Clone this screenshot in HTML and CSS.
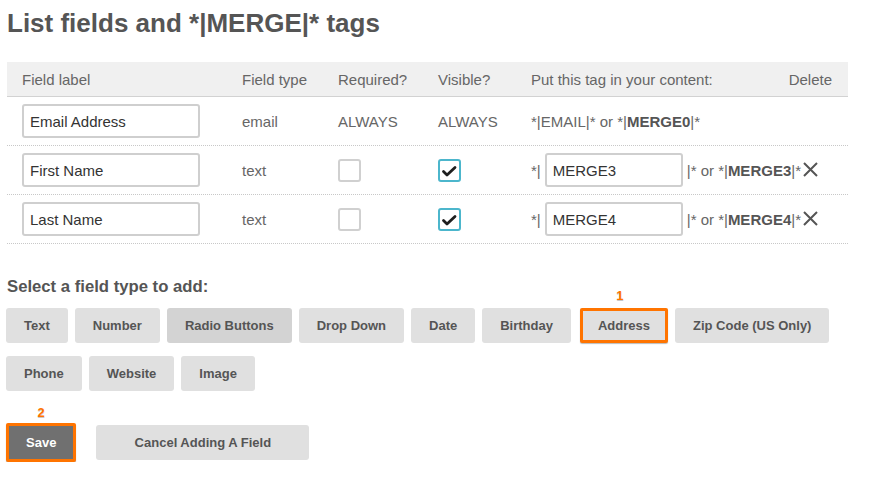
FILE: index.html
```html
<!DOCTYPE html>
<html>
<head>
<meta charset="utf-8">
<link rel="stylesheet" href="styles.css">
</head>
<body>
<div class="page">
  <h1 class="title">List fields and *|MERGE|* tags</h1>

  <div class="fields">
    <div class="row head">
      <div class="cell">Field label</div>
      <div class="cell">Field type</div>
      <div class="cell">Required?</div>
      <div class="cell">Visible?</div>
      <div class="cell tagcell"><span>Put this tag in your content:</span><span class="del-head">Delete</span></div>
    </div>

    <div class="row">
      <div class="cell"><div class="input label-input">Email Address</div></div>
      <div class="cell">email</div>
      <div class="cell">ALWAYS</div>
      <div class="cell">ALWAYS</div>
      <div class="cell tagcell">*|EMAIL|* or *|<b>MERGE0</b>|*</div>
    </div>

    <div class="row">
      <div class="cell"><div class="input label-input">First Name</div></div>
      <div class="cell">text</div>
      <div class="cell"><span class="check"></span></div>
      <div class="cell"><span class="check on"><svg width="19" height="19" viewBox="0 0 19 19"><path d="M3.5 10.5 L7 14 L15 6.5" fill="none" stroke="#1e1e1e" stroke-width="2.8" stroke-linecap="round" stroke-linejoin="round"/></svg></span></div>
      <div class="cell tagcell">
        <span class="tag">*|</span>
        <div class="input tag-input">MERGE3</div>
        <span class="tag">|* or *|<b>MERGE3</b>|*</span>
        <svg class="x" width="15" height="15" viewBox="0 0 15 15"><path d="M1 1 L14 14 M14 1 L1 14" stroke="#555" stroke-width="2"/></svg>
      </div>
    </div>

    <div class="row">
      <div class="cell"><div class="input label-input">Last Name</div></div>
      <div class="cell">text</div>
      <div class="cell"><span class="check"></span></div>
      <div class="cell"><span class="check on"><svg width="19" height="19" viewBox="0 0 19 19"><path d="M3.5 10.5 L7 14 L15 6.5" fill="none" stroke="#1e1e1e" stroke-width="2.8" stroke-linecap="round" stroke-linejoin="round"/></svg></span></div>
      <div class="cell tagcell">
        <span class="tag">*|</span>
        <div class="input tag-input">MERGE4</div>
        <span class="tag">|* or *|<b>MERGE4</b>|*</span>
        <svg class="x" width="15" height="15" viewBox="0 0 15 15"><path d="M1 1 L14 14 M14 1 L1 14" stroke="#555" stroke-width="2"/></svg>
      </div>
    </div>
  </div>

  <h2 class="subtitle">Select a field type to add:</h2>

  <div class="btn-row">
    <span class="btn">Text</span>
    <span class="btn">Number</span>
    <span class="btn active">Radio Buttons</span>
    <span class="btn">Drop Down</span>
    <span class="btn">Date</span>
    <span class="btn">Birthday</span>
    <span class="btn marked">Address<span class="note note1">1</span></span>
    <span class="btn">Zip Code (US Only)</span>
  </div>
  <div class="btn-row">
    <span class="btn">Phone</span>
    <span class="btn">Website</span>
    <span class="btn">Image</span>
  </div>

  <div class="actions">
    <span class="btn save">Save<span class="note note2">2</span></span>
    <span class="btn cancel">Cancel Adding A Field</span>
  </div>
</div>
</body>
</html>
```

FILE: styles.css
```css
* { box-sizing: border-box; }

body {
  margin: 0;
  background: #fff;
  font-family: Arial, "Liberation Sans", sans-serif;
  color: #666;
}

.page {
  padding: 8px 25px 0 7px;
}

.title {
  margin: 0;
  font-size: 26px;
  line-height: 30px;
  font-weight: bold;
  color: #555;
}

.fields {
  margin-top: 24px;
}

.row {
  display: grid;
  grid-template-columns: 220px 96px 100px 93px 1fr;
  height: 49px;
  border-bottom: 1px dotted #c8c8c8;
  font-size: 15px;
}

.row.head {
  height: 35px;
  background: #f0f0f0;
  border-bottom: 1px solid #d2d2d2;
  color: #666;
}

.cell {
  display: flex;
  align-items: center;
  padding: 0 0 0 15px;
  white-space: nowrap;
}

.tagcell b { color: #555; }

.head .tagcell {
  justify-content: space-between;
  padding-right: 16px;
}

.input {
  height: 34px;
  border: 2px solid #cfcfcf;
  border-radius: 3px;
  padding-left: 6px;
  display: flex;
  align-items: center;
  color: #333;
  font-size: 15px;
  background: #fff;
}

.label-input { width: 178px; }

.tag-input {
  width: 138px;
  margin: 0 4px 0 4px;
}

.x { margin-left: 2px; margin-top: -1px; }

.check {
  width: 23px;
  height: 23px;
  border: 2px solid #d0d0d0;
  border-radius: 3px;
  display: block;
}

.check.on {
  border-color: #4cb6cc;
}

.check svg { display: block; }

.subtitle {
  margin: 33px 0 0 0;
  font-size: 16.7px;
  line-height: 20px;
  color: #555;
  font-weight: bold;
}

.btn-row {
  display: flex;
  gap: 7px;
  margin-top: 11px;
  margin-left: -1px;
}

.btn-row + .btn-row { margin-top: 13px; }

.btn {
  position: relative;
  display: inline-flex;
  align-items: center;
  justify-content: center;
  height: 35px;
  padding: 0 18px;
  background: #e0e0e0;
  border-radius: 3px;
  font-size: 13px;
  font-weight: bold;
  color: #555;
  white-space: nowrap;
}

.btn.active { background: #d3d3d3; }

.btn.marked {
  margin-left: 2px;
  border: 3px solid #ff7400;
  border-radius: 2px;
  padding: 0 15px;
  box-shadow: 0 1px 1px #bbb;
}

.note {
  position: absolute;
  left: 50%;
  transform: translateX(-50%);
  font-size: 13px;
  font-weight: bold;
  color: #ff7400;
  text-shadow: 0 1px 0 #c8c8c8;
  line-height: 14px;
}

.note1 { top: -22px; margin-left: -4px; }
.note2 { top: -20px; }

.actions {
  display: flex;
  align-items: center;
  gap: 20px;
  margin-top: 32px;
  margin-left: -1px;
}

.btn.save {
  height: 39px;
  background: #707070;
  color: #fff;
  border: 3px solid #ff7400;
  border-radius: 2px;
  padding: 0 17px;
  box-shadow: 0 1px 1px #bbb;
}

.btn.cancel {
  width: 213px;
  padding: 0;
}
```
